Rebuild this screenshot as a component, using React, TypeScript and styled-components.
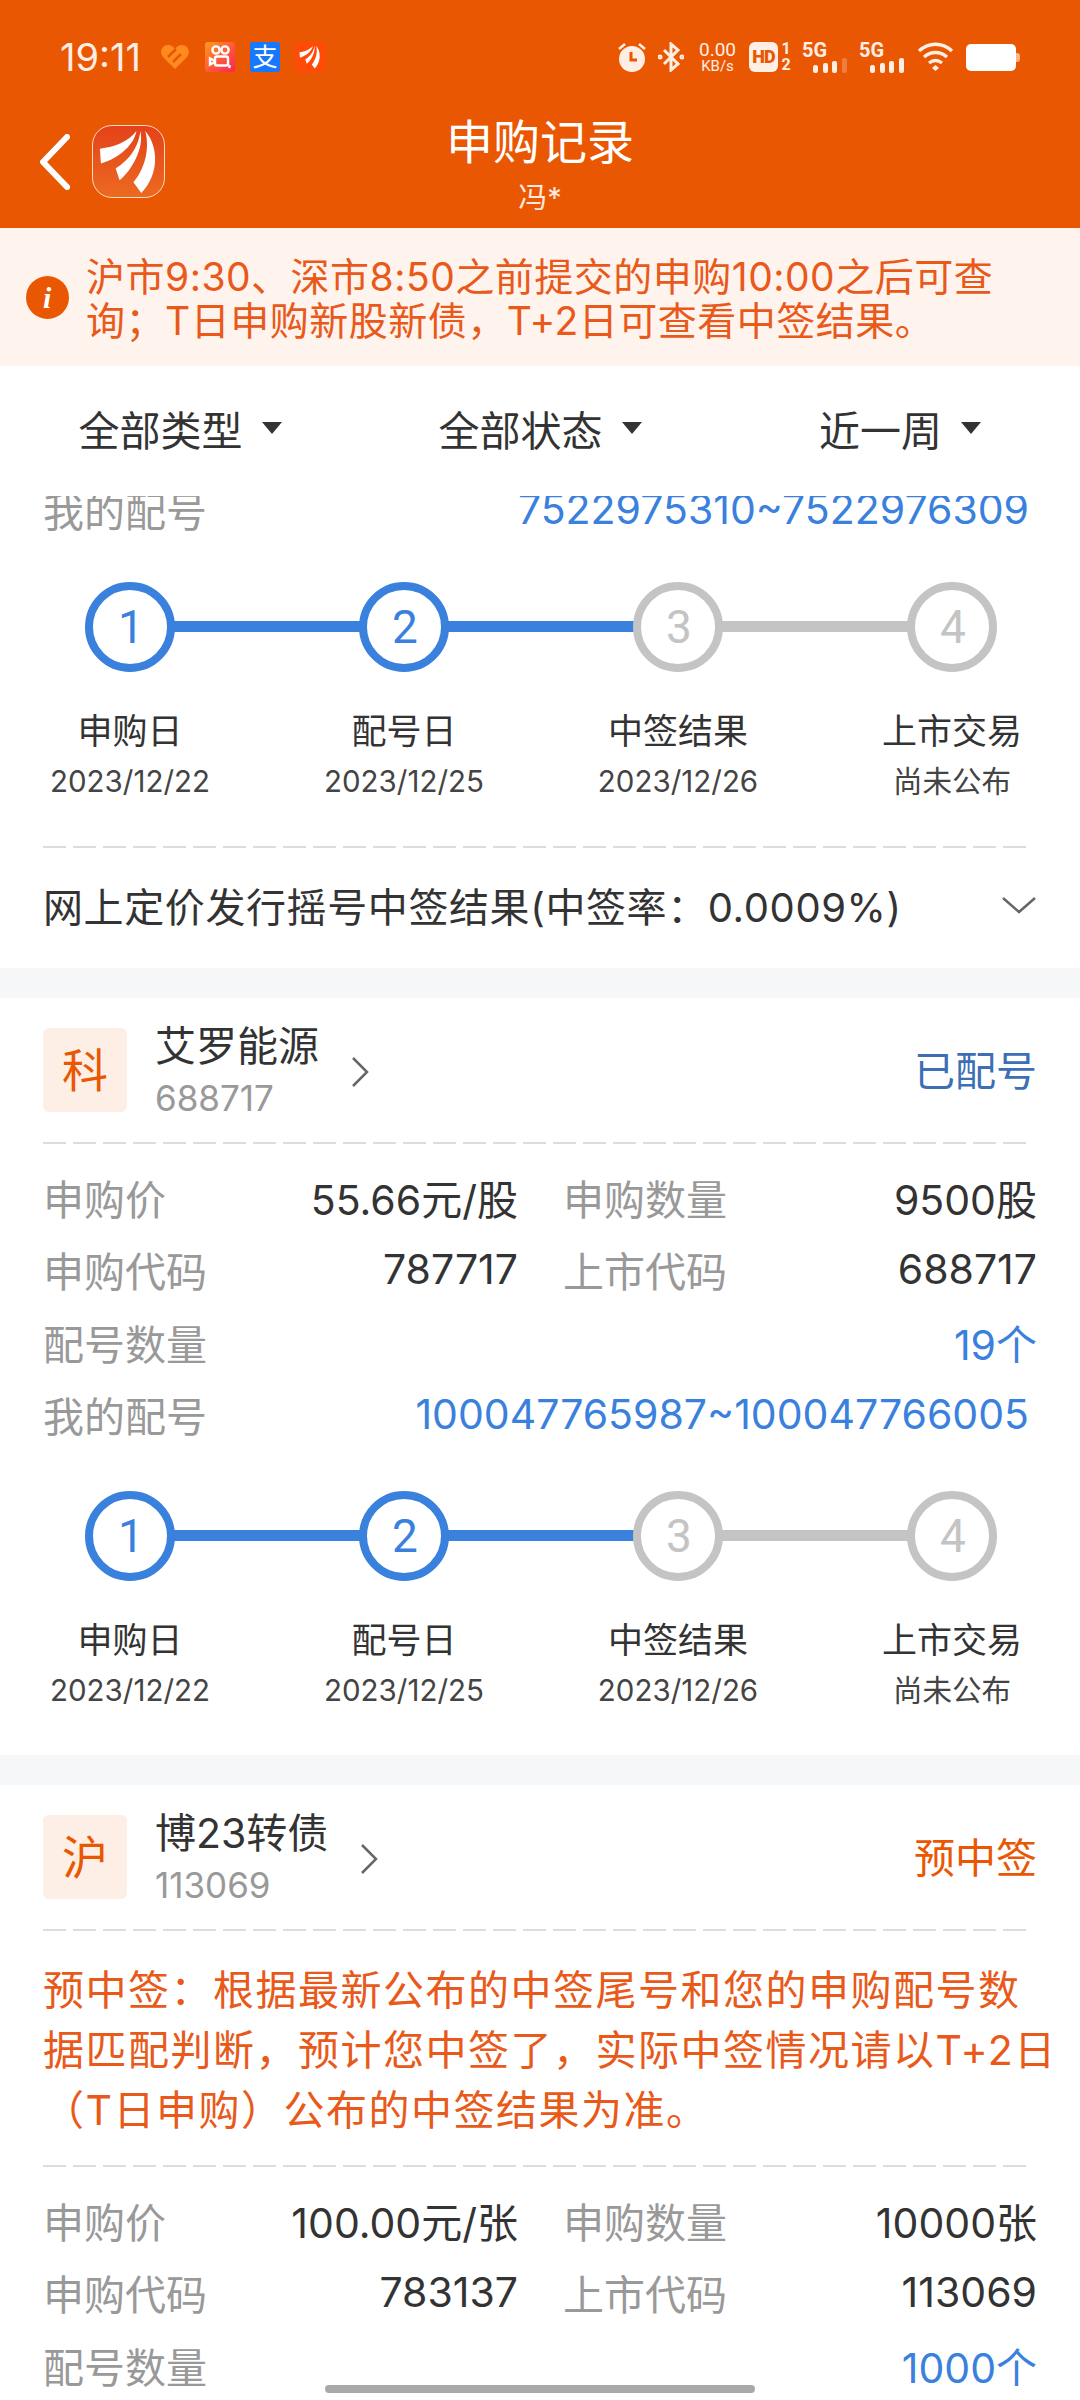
import React from 'react';
import styled, { createGlobalStyle } from 'styled-components';

const ORANGE = '#ea5703';
const BLUE = '#3a80dd';

const GlobalStyle = createGlobalStyle`
  html, body {
    margin: 0;
    padding: 0;
    background: #fff;
    font-family: "Inter", "Noto Sans CJK SC", sans-serif;
  }
`;

const Page = styled.div`
  position: relative;
  width: 1080px;
  height: 2400px;
  overflow: hidden;
  display: flex;
  flex-direction: column;
  background: #fff;
  color: #333;
`;

const Header = styled.header`
  height: 228px;
  flex-shrink: 0;
  background: ${ORANGE};
  display: flex;
  flex-direction: column;
`;

const StatusBar = styled.div`
  height: 100px;
  padding: 14px 60px 0;
  box-sizing: border-box;
  display: flex;
  align-items: center;
  justify-content: space-between;
  color: #ffeee4;
`;

const StatusGroup = styled.div`
  display: flex;
  align-items: center;
`;

const Time = styled.span`
  font-size: 38px;
  width: 101px;
`;

const AppTile = styled.span<{ $bg: string; $gap?: number }>`
  width: 30px;
  height: 30px;
  margin-right: ${p => p.$gap ?? 15}px;
  border-radius: 3px;
  background: ${p => p.$bg};
  color: #fff;
  font-size: 25px;
  line-height: 30px;
  text-align: center;
  overflow: hidden;
  display: flex;
  align-items: center;
  justify-content: center;
`;

const Speed = styled.span`
  width: 37px;
  margin: 0 13px 0 15px;
  display: flex;
  flex-direction: column;
  align-items: center;
  font-family: "Roboto", sans-serif;

  b {
    font-weight: 400;
    font-size: 19px;
    line-height: 19px;
  }
  i {
    font-style: normal;
    font-size: 15px;
    line-height: 15px;
  }
`;

const HdTile = styled.span`
  width: 29px;
  height: 30px;
  border-radius: 6px;
  background: #ffeee4;
  color: ${ORANGE};
  font-family: "Roboto", sans-serif;
  font-weight: 900;
  font-size: 18px;
  line-height: 30px;
  text-align: center;
  letter-spacing: -1px;
`;

const SimSlots = styled.span`
  width: 10px;
  margin-left: 3px;
  display: flex;
  flex-direction: column;
  align-items: center;
  font-family: "Roboto", sans-serif;
  font-weight: 700;
  font-size: 16px;
  line-height: 16px;
`;

const Signal = styled.span<{ $gap: number }>`
  width: 45px;
  margin-left: ${p => p.$gap}px;
  display: flex;
  flex-direction: column;
  font-family: "Roboto", sans-serif;
  font-weight: 700;
  font-size: 20px;
  line-height: 16px;
`;

const Bars = styled.span`
  display: flex;
  align-items: flex-end;
  justify-content: flex-end;
  gap: 4.600px;
  height: 15px;
`;

const Bar = styled.span<{ $h: number; $dim?: boolean }>`
  width: 5px;
  height: ${p => p.$h}px;
  border-radius: 2px;
  background: #ffeee4;
  opacity: ${p => (p.$dim ? 0.25 : 1)};
`;

const Battery = styled.span`
  position: relative;
  width: 50px;
  height: 27px;
  margin-left: 12px;
  margin-right: 4px;
  border-radius: 5px;
  background: #fff;

  &::after {
    content: '';
    position: absolute;
    right: -4px;
    top: 9px;
    width: 4px;
    height: 9px;
    border-radius: 0 3px 3px 0;
    background: #ffb38a;
  }
`;

const NavBar = styled.div`
  flex: 1;
  display: grid;
  grid-template-columns: 1fr auto 1fr;
  align-items: start;
`;

const NavLeft = styled.div`
  display: flex;
  align-items: center;
  padding: 25px 0 0 40px;
  gap: 22px;
`;

const Logo = styled.span`
  width: 73px;
  height: 73px;
  box-sizing: border-box;
  border: 1px solid #ffd9c2;
  border-radius: 20px;
  background: linear-gradient(180deg, #e4421a, #ec6a20);
  display: flex;
`;

const TitleBlock = styled.div`
  padding-top: 12px;
  display: flex;
  flex-direction: column;
  align-items: center;
  color: #fff;
`;

const Title = styled.div`
  font-size: 47px;
  line-height: 60px;
`;

const SubTitle = styled.div`
  margin-top: 6px;
  font-size: 29px;
  line-height: 40px;
  color: #ffe9dc;
`;

const Notice = styled.div`
  height: 138px;
  flex-shrink: 0;
  box-sizing: border-box;
  padding: 27px 0 0 26px;
  background: #fff3ed;
  display: flex;
  gap: 17px;
  color: #e8591a;
  font-size: 39px;
  letter-spacing: 0.5px;
  line-height: 44px;
  white-space: nowrap;
`;

const InfoDot = styled.span`
  width: 43px;
  height: 43px;
  margin-top: 21px;
  flex-shrink: 0;
  border-radius: 50%;
  background: ${ORANGE};
  color: #fff;
  font-family: "Liberation Serif", serif;
  font-style: italic;
  font-weight: 700;
  font-size: 30px;
  line-height: 43px;
  text-align: center;
`;

const Filters = styled.div`
  height: 130px;
  flex-shrink: 0;
  display: grid;
  grid-template-columns: repeat(3, 1fr);
  align-items: center;
  padding-bottom: 6px;
  box-sizing: border-box;
  background: #fff;
  position: relative;
  z-index: 1;
`;

const Filter = styled.div`
  display: flex;
  justify-content: center;
  align-items: center;
  gap: 19px;
  font-size: 41px;
`;

const Caret = styled.span`
  width: 0;
  height: 0;
  border-left: 10px solid transparent;
  border-right: 10px solid transparent;
  border-top: 12px solid #333;
`;

const Feed = styled.div`
  flex: 1;
  overflow: hidden;
`;

const Card = styled.section<{ $offset?: number }>`
  padding: 0 43px;
  margin-top: ${p => p.$offset ?? 0}px;
  background: #fff;
`;

const Gap = styled.div`
  height: 30px;
  background: #f6f7f9;
`;

const Dashed = styled.div`
  height: 2px;
  margin-right: 9px;
  background: repeating-linear-gradient(90deg, #ddd 0 23px, transparent 23px 30px);
`;

const CardHead = styled.div`
  display: flex;
  align-items: center;
  height: 144px;
  box-sizing: border-box;
`;

const Badge = styled.span`
  width: 84px;
  height: 84px;
  flex-shrink: 0;
  border-radius: 6px;
  background: #fdeee6;
  color: ${ORANGE};
  font-size: 46px;
  line-height: 84px;
  text-align: center;
  margin-right: 28px;
`;

const NameBlock = styled.div`
  display: flex;
  flex-direction: column;
  gap: 6px;
`;

const StockName = styled.span`
  font-size: 41px;
  line-height: 50px;
  color: #333;
`;

const StockCode = styled.span`
  font-size: 35px;
  line-height: 42px;
  color: #999;
`;

const Chevron = styled.svg`
  margin: 4px 0 0 32px;
`;

const StatusText = styled.span<{ $color: string }>`
  margin-left: auto;
  padding-bottom: 3px;
  font-size: 41px;
  color: ${p => p.$color};
`;

const Rows = styled.div`
  padding: 17px 0 3px;
`;

const Row = styled.div`
  height: 72.5px;
  display: grid;
  grid-template-columns: 475px 1fr;
  column-gap: 45px;
  align-items: center;
  font-size: 41px;
`;

const Cell = styled.div`
  display: flex;
  justify-content: space-between;
  align-items: center;
`;

const WideRow = styled.div`
  height: 72.5px;
  display: flex;
  justify-content: space-between;
  align-items: center;
  font-size: 41px;
`;

const Label = styled.span`
  color: #999;
`;

const Value = styled.span<{ $blue?: boolean; $inset?: number }>`
  color: ${p => (p.$blue ? BLUE : '#333')};
  margin-right: ${p => p.$inset ?? 0}px;
`;

const Stepper = styled.div<{ $top: number }>`
  display: grid;
  grid-template-columns: repeat(4, 274px);
  margin: ${p => p.$top}px -50px 0;
  padding-bottom: 45px;
`;

const Step = styled.div<{ $line?: string }>`
  position: relative;
  display: flex;
  flex-direction: column;
  align-items: center;

  &::after {
    content: '';
    display: ${p => (p.$line ? 'block' : 'none')};
    position: absolute;
    left: 50%;
    top: 39px;
    width: 100%;
    height: 11px;
    background: ${p => p.$line};
  }
`;

const Circle = styled.span<{ $color: string }>`
  position: relative;
  z-index: 1;
  width: 90px;
  height: 90px;
  padding-left: 2px;
  box-sizing: border-box;
  border: 8px solid ${p => p.$color};
  border-radius: 50%;
  background: #fff;
  color: ${p => p.$color};
  font-family: "Roboto", sans-serif;
  font-size: 46px;
  line-height: 74px;
  text-align: center;
`;

const StepName = styled.span`
  margin-top: 36px;
  font-size: 35px;
  line-height: 46px;
  color: #333;
`;

const StepDate = styled.span`
  margin-top: 7px;
  font-size: 29.500px;
  line-height: 40px;
  color: #444;
`;

const ResultRow = styled.div`
  height: 120px;
  box-sizing: border-box;
  padding-bottom: 6px;
  display: flex;
  align-items: center;
  justify-content: space-between;
  font-size: 40px;
  letter-spacing: 0.6px;
  color: #333;
`;

const Warn = styled.p`
  margin: 0;
  padding: 29px 0 25px;
  font-size: 41px;
  letter-spacing: 1.500px;
  line-height: 60px;
  color: #e8591a;
  white-space: nowrap;
`;

const HomeBar = styled.div`
  position: absolute;
  left: 325px;
  bottom: 7px;
  width: 430px;
  height: 8px;
  border-radius: 4px;
  background: #a9a9a9;
`;

const FeatherMarks = ({ size }: { size: number }) => (
  <svg width={size} height={size} viewBox="0 0 72 72" fill="#fff">
    <path d="M7 23C22 21 36 16 44 5C42 18 28 32 8 38Z" />
    <path d="M48 5C52 22 40 44 27 55L23 43C34 36 46 24 48 5Z" />
    <path d="M53 5C66 20 68 48 49 68L41 57C52 44 58 24 53 5Z" />
  </svg>
);

const steps = ['申购日', '配号日', '中签结果', '上市交易'];
const dates = ['2023/12/22', '2023/12/25', '2023/12/26', '尚未公布'];

const StepTrack = ({ top }: { top: number }) => (
  <Stepper $top={top}>
    {steps.map((name, i) => (
      <Step key={name} $line={i === 3 ? undefined : i < 2 ? BLUE : '#c4c4c4'}>
        <Circle $color={i < 2 ? BLUE : '#c4c4c4'}>{i + 1}</Circle>
        <StepName>{name}</StepName>
        <StepDate>{dates[i]}</StepDate>
      </Step>
    ))}
  </Stepper>
);

const StockHead = ({ tag, name, code, status, color }: { tag: string; name: string; code: string; status: string; color: string }) => (
  <CardHead>
    <Badge>{tag}</Badge>
    <NameBlock>
      <StockName>{name}</StockName>
      <StockCode>{code}</StockCode>
    </NameBlock>
    <Chevron width="18" height="32" viewBox="0 0 18 32" fill="none" stroke="#666" strokeWidth="2.500">
      <path d="M2 2l14 14L2 30" />
    </Chevron>
    <StatusText $color={color}>{status}</StatusText>
  </CardHead>
);

const PairRow = ({ a, b, c, d }: { a: string; b: string; c: string; d: string }) => (
  <Row>
    <Cell>
      <Label>{a}</Label>
      <Value>{b}</Value>
    </Cell>
    <Cell>
      <Label>{c}</Label>
      <Value>{d}</Value>
    </Cell>
  </Row>
);

const SignalMark = ({ gap, dim }: { gap: number; dim?: boolean }) => (
  <Signal $gap={gap}>
    5G
    <Bars>
      <Bar $h={8} />
      <Bar $h={10} />
      <Bar $h={12} />
      <Bar $h={15} $dim={dim} />
    </Bars>
  </Signal>
);

export default function App() {
  return (
    <Page>
      <GlobalStyle />
      <Header>
        <StatusBar>
          <StatusGroup>
            <Time>19:11</Time>
            <svg width="28" height="24" viewBox="0 0 28 24" style={{ marginRight: 16 }}>
              <path d="M14 24L2 12C-2 7 1 0 7 0c3 0 5 1.500 7 4 2-2.500 4-4 7-4 6 0 9 7 5 12z" fill="#ff8a1e" />
              <path d="M15 4l-8 8M20 9l-8 8" stroke={ORANGE} strokeWidth="2.500" />
            </svg>
            <AppTile $bg="linear-gradient(135deg,#ff9a1c,#ff2058)">
              <svg width="26" height="28" viewBox="0 0 26 28" fill="none" stroke="#fff" strokeWidth="2.400">
                <circle cx="9" cy="7" r="3.600" />
                <circle cx="18" cy="7" r="3.600" />
                <rect x="8" y="13.500" width="13" height="9" rx="2" />
                <path d="M8 18l-5-2.500v6L8 19M23 22l-1 3" />
              </svg>
            </AppTile>
            <AppTile $bg="#1677ff">支</AppTile>
            <AppTile $bg="#ff4a08" $gap={0}>
              <FeatherMarks size={26} />
            </AppTile>
          </StatusGroup>
          <StatusGroup>
            <svg width="28" height="30" viewBox="0 0 28 30">
              <circle cx="14" cy="17" r="13" fill="#ffeee4" />
              <path d="M13 10v8h6" fill="none" stroke={ORANGE} strokeWidth="3" />
              <path d="M1 7l6-5M27 7l-6-5" stroke="#ffeee4" strokeWidth="2.500" />
            </svg>
            <svg width="26" height="30" viewBox="0 0 26 30" fill="none" stroke="#ffeee4" strokeWidth="3" style={{ marginLeft: 12 }}>
              <path d="M6 8l14 14-7 6V2l7 6L6 22" />
              <circle cx="2" cy="15" r="1" />
              <circle cx="24" cy="15" r="1" />
            </svg>
            <Speed>
              <b>0.00</b>
              <i>KB/s</i>
            </Speed>
            <HdTile>HD</HdTile>
            <SimSlots>
              <span>1</span>
              <span>2</span>
            </SimSlots>
            <SignalMark gap={11} dim />
            <SignalMark gap={12} />
            <svg width="37" height="30" viewBox="0 0 37 30" fill="none" stroke="#ffeee4" strokeWidth="3.400" style={{ marginLeft: 13 }}>
              <path d="M2 9c10-9 23-9 33 0M7 15c7-6 16-6 23 0M12 21c4-3 9-3 13 0" />
              <path d="M15 26l3.500-3 3.500 3-3.500 3z" fill="#ffeee4" stroke="none" />
            </svg>
            <Battery />
          </StatusGroup>
        </StatusBar>
        <NavBar>
          <NavLeft>
            <svg width="30" height="56" viewBox="0 0 30 56" fill="none" stroke="#fff" strokeWidth="6" strokeLinecap="round" strokeLinejoin="round">
              <path d="M27 3L3 28l24 25" />
            </svg>
            <Logo>
              <FeatherMarks size={71} />
            </Logo>
          </NavLeft>
          <TitleBlock>
            <Title>申购记录</Title>
            <SubTitle>冯*</SubTitle>
          </TitleBlock>
          <div />
        </NavBar>
      </Header>

      <Notice>
        <InfoDot>i</InfoDot>
        <div>
          沪市9:30、深市8:50之前提交的申购10:00之后可查
          <br />
          询；T日申购新股新债，T+2日可查看中签结果。
        </div>
      </Notice>

      <Filters>
        <Filter>全部类型<Caret /></Filter>
        <Filter>全部状态<Caret /></Filter>
        <Filter>近一周<Caret /></Filter>
      </Filters>

      <Feed>
        <Card $offset={-23}>
          <WideRow>
            <Label>我的配号</Label>
            <Value $blue $inset={8}>7522975310~7522976309</Value>
          </WideRow>
          <StepTrack top={36} />
          <Dashed />
          <ResultRow>
            <span>网上定价发行摇号中签结果(中签率：0.0009%)</span>
            <svg width="36" height="20" viewBox="0 0 36 20" fill="none" stroke="#666" strokeWidth="2.500">
              <path d="M2 3l16 14L34 3" />
            </svg>
          </ResultRow>
        </Card>
        <Gap />
        <Card>
          <StockHead tag="科" name="艾罗能源" code="688717" status="已配号" color="#3c6fb4" />
          <Dashed />
          <Rows>
            <PairRow a="申购价" b="55.66元/股" c="申购数量" d="9500股" />
            <PairRow a="申购代码" b="787717" c="上市代码" d="688717" />
            <WideRow>
              <Label>配号数量</Label>
              <Value $blue>19个</Value>
            </WideRow>
            <WideRow>
              <Label>我的配号</Label>
              <Value $blue $inset={8}>100047765987~100047766005</Value>
            </WideRow>
          </Rows>
          <StepTrack top={37} />
        </Card>
        <Gap />
        <Card>
          <StockHead tag="沪" name="博23转债" code="113069" status="预中签" color={ORANGE} />
          <Dashed />
          <Warn>
            预中签：根据最新公布的中签尾号和您的申购配号数
            <br />
            据匹配判断，预计您中签了，实际中签情况请以T+2日
            <br />
            （T日申购）公布的中签结果为准。
          </Warn>
          <Dashed />
          <Rows>
            <PairRow a="申购价" b="100.00元/张" c="申购数量" d="10000张" />
            <PairRow a="申购代码" b="783137" c="上市代码" d="113069" />
            <WideRow>
              <Label>配号数量</Label>
              <Value $blue>1000个</Value>
            </WideRow>
          </Rows>
        </Card>
      </Feed>
      <HomeBar />
    </Page>
  );
}
